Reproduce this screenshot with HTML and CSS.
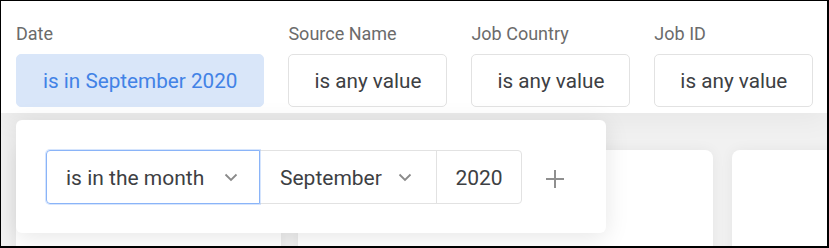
FILE: index.html
```html
<!DOCTYPE html>
<html>
<head>
<meta charset="utf-8">
<link rel="stylesheet" href="styles.css">
</head>
<body>
<div class="frame">
  <div class="filterbar">
    <div class="filter">
      <div class="label">Date</div>
      <div class="chip chip-active">is in September 2020</div>
    </div>
    <div class="filter">
      <div class="label">Source Name</div>
      <div class="chip">is any value</div>
    </div>
    <div class="filter">
      <div class="label">Job Country</div>
      <div class="chip">is any value</div>
    </div>
    <div class="filter">
      <div class="label">Job ID</div>
      <div class="chip">is any value</div>
    </div>
  </div>
  <div class="cards">
    <div class="card card-a"></div>
    <div class="card card-b"></div>
    <div class="card card-c"></div>
  </div>
  <div class="popup">
    <div class="group">
      <div class="sel sel-op focused">
        <span>is in the month</span>
        <svg class="chev" width="14" height="9" viewBox="0 0 14 9"><path d="M1.5 1.5 L7 7 L12.5 1.5" fill="none" stroke="#8a8a8a" stroke-width="1.8"/></svg>
      </div>
      <div class="sel sel-month">
        <span>September</span>
        <svg class="chev" width="14" height="9" viewBox="0 0 14 9"><path d="M1.5 1.5 L7 7 L12.5 1.5" fill="none" stroke="#8a8a8a" stroke-width="1.8"/></svg>
      </div>
      <div class="sel sel-year">2020</div>
    </div>
    <svg class="plus" width="18" height="18" viewBox="0 0 18 18"><path d="M9 0 V18 M0 9 H18" stroke="#8f8f8f" stroke-width="2"/></svg>
  </div>
</div>
</body>
</html>
```
FILE: styles.css
```css
html, body {
  margin: 0;
  padding: 0;
  background: #fff;
}
.frame {
  position: relative;
  width: 829px;
  height: 248px;
  box-sizing: border-box;
  border-top: 1px solid #000;
  border-left: 1px solid #000;
  border-right: 2px solid #000;
  border-bottom: 2px solid #000;
  background: #f1f1f1;
  overflow: hidden;
  font-family: Roboto, "Liberation Sans", sans-serif;
}
.filterbar {
  position: relative;
  z-index: 2;
  display: flex;
  gap: 24px;
  height: 112px;
  box-sizing: border-box;
  padding: 21px 0 0 15px;
  background: #fff;
  box-shadow: 0 8px 26px rgba(0, 0, 0, 0.045);
}
.filter {
  display: flex;
  flex-direction: column;
  gap: 9px;
}
.label {
  font-size: 18px;
  line-height: 23px;
  color: #6b6b6b;
}
.chip {
  height: 53px;
  box-sizing: border-box;
  padding: 1px 25px 0;
  display: flex;
  align-items: center;
  border: 1px solid #e2e2e2;
  border-radius: 5px;
  font-size: 20.7px;
  color: #3d4043;
  background: #fff;
}
.chip-active {
  padding: 1px 26px 0;
  background: #d9e6f9;
  border-color: #d9e6f9;
  color: #4282e6;
}
.cards {
  display: flex;
  gap: 17px;
  padding: 37px 0 0 15px;
}
.card {
  flex-shrink: 0;
  height: 130px;
  background: #fff;
  border-radius: 8px;
  box-shadow: 0 0 14px rgba(0, 0, 0, 0.05);
}
.card-a { width: 265px; }
.card-b { width: 415px; margin-right: 2px; }
.card-c { width: 120px; }
.popup {
  position: absolute;
  z-index: 3;
  left: 15px;
  top: 119px;
  width: 590px;
  height: 113px;
  box-sizing: border-box;
  padding: 30px;
  background: #fff;
  border-radius: 6px;
  box-shadow: 0 4px 24px rgba(0, 0, 0, 0.10);
  display: flex;
  align-items: center;
  gap: 24px;
}
.group {
  display: flex;
  height: 54px;
}
.sel {
  height: 54px;
  box-sizing: border-box;
  display: flex;
  align-items: center;
  justify-content: space-between;
  border: 1px solid #e2e2e2;
  font-size: 21px;
  color: #3d4043;
}
.sel > span {
  padding-top: 3px;
}
.sel-op {
  width: 214px;
  padding: 0 21px 0 19px;
  border-radius: 4px 0 0 4px;
}
.focused {
  border-color: #8ab4f8;
  box-shadow: 0 0 0 1px rgba(138, 180, 248, 0.35);
  position: relative;
  z-index: 1;
}
.sel-month {
  width: 178px;
  margin-left: -1px;
  padding: 0 24px 0 20px;
}
.sel-year {
  width: 86px;
  margin-left: -1px;
  padding-top: 3px;
  justify-content: center;
  border-radius: 0 4px 4px 0;
}
.chev {
  display: block;
  margin-top: 2px;
}
.plus {
  display: block;
  margin-top: 4px;
}
```
